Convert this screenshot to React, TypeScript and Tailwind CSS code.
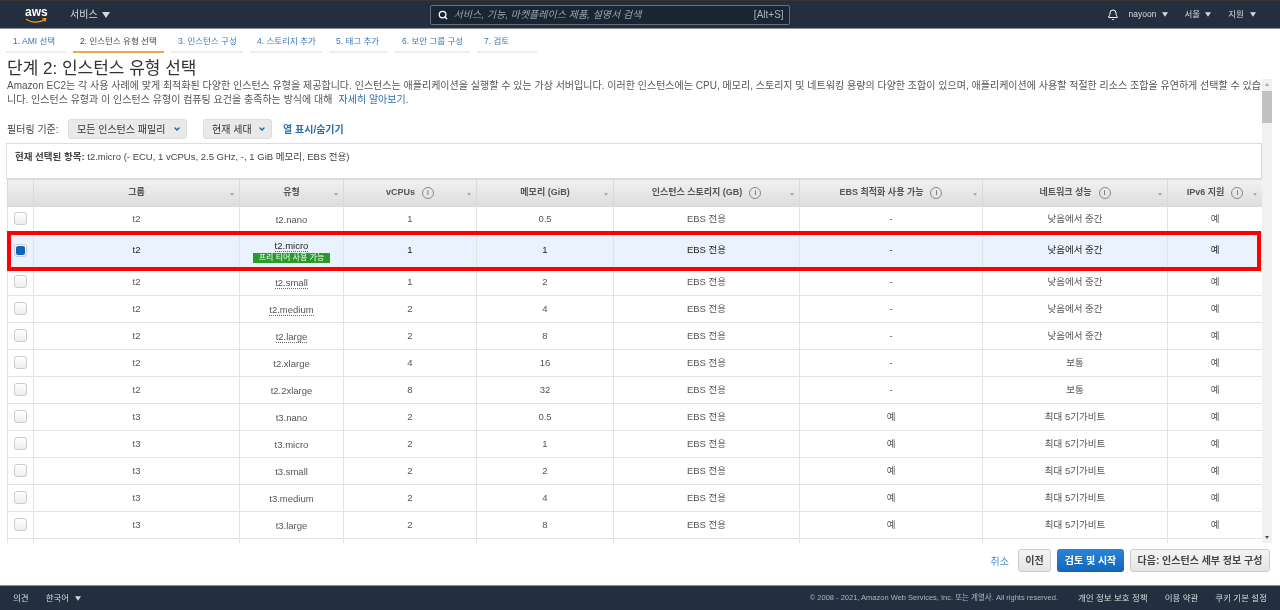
import React from 'react';
import { Bell, ChevronDown, Search } from 'lucide-react';

type Row = { group: string; type: string; cpu: string; mem: string; ebs: string; net: string; dotted?: boolean; selected?: boolean };

const LOW = '낮음에서 중간';
const MID = '보통';
const MAX = '최대 5기가비트';

const ROWS: Row[] = [
  { group: 't2', type: 't2.nano', cpu: '1', mem: '0.5', ebs: '-', net: LOW },
  { group: 't2', type: 't2.micro', cpu: '1', mem: '1', ebs: '-', net: LOW, dotted: true, selected: true },
  { group: 't2', type: 't2.small', cpu: '1', mem: '2', ebs: '-', net: LOW, dotted: true },
  { group: 't2', type: 't2.medium', cpu: '2', mem: '4', ebs: '-', net: LOW, dotted: true },
  { group: 't2', type: 't2.large', cpu: '2', mem: '8', ebs: '-', net: LOW, dotted: true },
  { group: 't2', type: 't2.xlarge', cpu: '4', mem: '16', ebs: '-', net: MID },
  { group: 't2', type: 't2.2xlarge', cpu: '8', mem: '32', ebs: '-', net: MID },
  { group: 't3', type: 't3.nano', cpu: '2', mem: '0.5', ebs: '예', net: MAX },
  { group: 't3', type: 't3.micro', cpu: '2', mem: '1', ebs: '예', net: MAX },
  { group: 't3', type: 't3.small', cpu: '2', mem: '2', ebs: '예', net: MAX },
  { group: 't3', type: 't3.medium', cpu: '2', mem: '4', ebs: '예', net: MAX },
  { group: 't3', type: 't3.large', cpu: '2', mem: '8', ebs: '예', net: MAX },
];

const HEADERS = [
  { label: '그룹' },
  { label: '유형' },
  { label: 'vCPUs', info: true },
  { label: '메모리 (GiB)' },
  { label: '인스턴스 스토리지 (GB)', info: true },
  { label: 'EBS 최적화 사용 가능', info: true },
  { label: '네트워크 성능', info: true },
  { label: 'IPv6 지원', info: true },
];

const TABS = [
  { label: '1. AMI 선택', w: 'w-[60px]' },
  { label: '2. 인스턴스 유형 선택', w: 'w-[91px]', active: true },
  { label: '3. 인스턴스 구성', w: 'w-[72px]' },
  { label: '4. 스토리지 추가', w: 'w-[72px]' },
  { label: '5. 태그 추가', w: 'w-[59px]' },
  { label: '6. 보안 그룹 구성', w: 'w-[75px]' },
  { label: '7. 검토', w: 'w-[60px]' },
];

const Tri = ({ className = '' }: { className?: string }) => (
  <svg viewBox="0 0 8 6" className={className}>
    <path d="M0 0h8L4 6z" fill="currentColor" />
  </svg>
);

const Info = () => (
  <span className="ml-[7px] inline-flex h-[12px] w-[12px] items-center justify-center rounded-full border border-[#888] text-[8px] font-normal leading-none text-[#555]">
    i
  </span>
);

const App: React.FC = () => {
  return (
    <div className="flex h-[610px] w-[1280px] flex-col overflow-hidden bg-white font-['Liberation_Sans','Noto_Sans_CJK_KR',sans-serif] text-[#444] blur-[0.35px]">
      {/* top nav */}
      <header className="flex h-[29px] shrink-0 items-center border-t border-b border-t-[#3a3330] border-b-[#8a9099] bg-[#232f3e] text-[9px] text-[#d5dbdb]">
        <div className="relative ml-[25px] w-[21px] text-center text-[12px] font-bold leading-none text-white">
          <span className="relative -top-[3px]">aws</span>
          <svg width="22" height="6" viewBox="0 0 22 6" className="absolute left-0 top-[9px]">
            <path d="M1 1c5 4 14 4 19 .5M17.5 .8l3.200-.3-.8 3" fill="none" stroke="#f90" strokeWidth="1.300" />
          </svg>
        </div>
        <span className="ml-[24px] text-[10px]">서비스</span>
        <Tri className="ml-[4px] h-[6px] w-[8px] text-[#d5dbdb]" />
        <div className="ml-[320px] flex h-[20px] w-[360px] items-center rounded-[2px] border border-[#687078] bg-[#1b2531] pl-[7px] pr-[5px]">
          <Search size={10} strokeWidth={3} className="text-white" />
          <span className="ml-[6px] flex-1 text-[10px] italic text-[#9aa3ad]">서비스, 기능, 마켓플레이스 제품, 설명서 검색</span>
          <span className="text-[10px] text-[#aab2bb]">[Alt+S]</span>
        </div>
        <Bell size={12} className="ml-[317px] text-white" />
        <span className="ml-[10px] text-[8.500px]">nayoon</span>
        <Tri className="ml-[5px] h-[5px] w-[6px]" />
        <span className="ml-[17px] text-[8.500px]">서울</span>
        <Tri className="ml-[5px] h-[5px] w-[6px]" />
        <span className="ml-[17px] text-[8.500px]">지원</span>
        <Tri className="ml-[6px] h-[5px] w-[6px]" />
      </header>

      {/* wizard steps */}
      <nav className="flex h-[24px] shrink-0 items-end gap-[7px] pl-[6px]">
        {TABS.map((t) => (
          <div
            key={t.label}
            className={`${t.w} h-[22px] border-b-2 pl-[7px] pt-[4px] text-[8.500px] leading-[12px] ${t.active ? 'border-[#f0a64a] text-[#444]' : 'border-[#eeeeee] text-[#3a78b5]'}`}
          >
            {t.label}
          </div>
        ))}
      </nav>

      <main className="relative h-[490px] shrink-0 overflow-hidden">
        <div className="pl-[7px] pr-[18px] pt-[5px]">
          <h1 className="h-[21px] text-[17px] font-normal leading-[21px] text-[#333]">단계 2: 인스턴스 유형 선택</h1>
          <div className="h-[28px] whitespace-nowrap text-[10px] leading-[14px] tracking-[0.012px] text-[#555]">
            <p>Amazon EC2는 각 사용 사례에 맞게 최적화된 다양한 인스턴스 유형을 제공합니다. 인스턴스는 애플리케이션을 실행할 수 있는 가상 서버입니다. 이러한 인스턴스에는 CPU, 메모리, 스토리지 및 네트워킹 용량의 다양한 조합이 있으며, 애플리케이션에 사용할 적절한 리소스 조합을 유연하게 선택할 수 있습</p>
            <p>
              니다. 인스턴스 유형과 이 인스턴스 유형이 컴퓨팅 요건을 충족하는 방식에 대해
              <span className="ml-[6px] text-[#2a6fb0]">자세히 알아보기</span>.
            </p>
          </div>
        </div>

        <div className="mt-[12px] flex h-[20px] items-center pl-[7px] text-[10px]">
          <span className="w-[61px] text-[#444]">필터링 기준:</span>
          <div className="flex h-[20px] w-[119px] items-center justify-between rounded-[3px] border border-[#ddd] bg-[#e9e9e9] pl-[8px] pr-[5px] text-[#333]">
            모든 인스턴스 패밀리
            <ChevronDown size={8} strokeWidth={4} className="text-[#1f5f9f]" />
          </div>
          <div className="ml-[16px] flex h-[20px] w-[69px] items-center justify-between rounded-[3px] border border-[#ddd] bg-[#e9e9e9] pl-[8px] pr-[5px] text-[#333]">
            현재 세대
            <ChevronDown size={8} strokeWidth={4} className="text-[#1f5f9f]" />
          </div>
          <span className="ml-[11px] font-bold text-[#2a6fb0]">열 표시/숨기기</span>
        </div>

        <div className="ml-[6px] mr-[18px] mt-[4px] h-[36px] border border-[#dddddd] pl-[8px] pt-[7px] text-[9.500px] leading-[12px] text-[#444]">
          <span className="font-bold">현재 선택된 항목:</span> t2.micro (- ECU, 1 vCPUs, 2.5 GHz, -, 1 GiB 메모리, EBS 전용)
        </div>

        <div className="relative ml-[7px] w-[1255px]">
          <table className="w-[1255px] table-fixed border-collapse text-center text-[9.500px] text-[#555]">
            <colgroup>
              <col className="w-[26px]" />
              <col className="w-[206px]" />
              <col className="w-[104px]" />
              <col className="w-[133px]" />
              <col className="w-[137px]" />
              <col className="w-[186px]" />
              <col className="w-[183px]" />
              <col className="w-[185px]" />
              <col className="w-[95px]" />
            </colgroup>
            <thead>
              <tr className="h-[27px] bg-gradient-to-b from-[#f1f1f1] to-[#dcdcdc]">
                <th className="border border-[#dadada] p-0" />
                {HEADERS.map((h) => (
                  <th key={h.label} className="relative border border-[#dadada] p-0 text-[9px] font-bold text-[#555]">
                    <span className="inline-flex items-center">
                      {h.label}
                      {h.info && <Info />}
                    </span>
                    <span className="absolute right-[5px] top-[13px] h-0 w-0 border-x-[2.500px] border-t-[3px] border-x-transparent border-t-[#aaaaaa]" />
                  </th>
                ))}
              </tr>
            </thead>
            <tbody>
              {ROWS.map((r, i) => {
                const td = 'border border-[#e3e3e3] p-0';
                return (
                  <tr
                    key={r.type}
                    className={r.selected ? 'h-[36px] bg-[#eaf3fd] text-[#222]' : i === 0 ? 'h-[26px]' : 'h-[27px]'}
                  >
                    <td className={td}>
                      <span className={`mx-auto flex h-[13px] w-[13px] items-center justify-center rounded-[3px] border border-[#cccccc] bg-gradient-to-b from-white to-[#eeeeee] ${r.selected ? '' : 'mb-[2px]'}`}>
                        {r.selected && <span className="h-[9px] w-[9px] rounded-[2px] bg-[#1166bb]" />}
                      </span>
                    </td>
                    <td className={td}>{r.group}</td>
                    <td className={td}>
                      <span className={`block leading-[11px] ${r.selected ? 'pt-[1px]' : ''}`}>
                        <span className={r.dotted ? 'border-b border-dotted border-[#666]' : ''}>{r.type}</span>
                      </span>
                      {r.selected && (
                        <span className="mx-auto mt-[2px] block h-[10px] w-[77px] bg-[#2a9a2a] text-[8px] leading-[10px] text-white">
                          프리 티어 사용 가능
                        </span>
                      )}
                    </td>
                    <td className={td}>{r.cpu}</td>
                    <td className={td}>{r.mem}</td>
                    <td className={td}>EBS 전용</td>
                    <td className={td}>{r.ebs}</td>
                    <td className={td}>{r.net}</td>
                    <td className={td}>예</td>
                  </tr>
                );
              })}
              {/* next row is scrolled out, only its borders show */}
              <tr className="h-[27px]">
                {Array.from({ length: 9 }).map((_, i) => (
                  <td key={i} className="border border-[#e3e3e3] p-0" />
                ))}
              </tr>
            </tbody>
          </table>
          {/* red highlight drawn over the selected row */}
          <div className="absolute left-0 right-[1px] top-[52px] h-[40px] border-4 border-[#ff0000]" />
        </div>

        {/* scrollbar */}
        <div className="absolute bottom-0 left-[1262px] top-[26px] flex w-[10px] flex-col items-center bg-[#f1f1f1]">
          <span className="mt-[4px] h-0 w-0 border-x-[2.500px] border-b-[3px] border-x-transparent border-b-[#a3a3a3]" />
          <span className="mt-[5px] h-[32px] w-[10px] bg-[#c1c1c1]" />
          <span className="mb-[4px] mt-auto h-0 w-0 border-x-[2.500px] border-t-[3px] border-x-transparent border-t-[#505050]" />
        </div>
      </main>

      {/* wizard actions */}
      <div className="flex h-[42px] shrink-0 items-start justify-end pr-[10px] pt-[6px] text-[10px]">
        <span className="mr-[9px] mt-[5px] text-[#4a90d9]">취소</span>
        <button className="h-[23px] w-[33px] rounded-[3px] border border-[#cccccc] bg-gradient-to-b from-[#f4f4f4] to-[#e5e5e5] font-bold text-[#444]">이전</button>
        <button className="ml-[6px] h-[23px] w-[67px] rounded-[3px] bg-gradient-to-b from-[#2a85d8] to-[#1166bb] font-bold text-white">검토 및 시작</button>
        <button className="ml-[6px] h-[23px] w-[140px] rounded-[3px] border border-[#cccccc] bg-gradient-to-b from-[#f4f4f4] to-[#e5e5e5] font-bold text-[#444]">다음: 인스턴스 세부 정보 구성</button>
      </div>

      {/* footer */}
      <footer className="flex h-[25px] shrink-0 items-center border-t border-[#8a9099] bg-[#232f3e] pl-[13px] text-[8.500px] text-[#d5dbdb]">
        <span>의견</span>
        <span className="ml-[17px]">한국어</span>
        <Tri className="ml-[6px] h-[5px] w-[6px]" />
        <span className="ml-auto text-[7.500px] text-[#aab7b8]">© 2008 - 2021, Amazon Web Services, Inc. 또는 계열사. All rights reserved.</span>
        <span className="ml-[20px]">개인 정보 보호 정책</span>
        <span className="ml-[17px]">이용 약관</span>
        <span className="ml-[17px] mr-[13px]">쿠키 기본 설정</span>
      </footer>
    </div>
  );
};

export default App;
